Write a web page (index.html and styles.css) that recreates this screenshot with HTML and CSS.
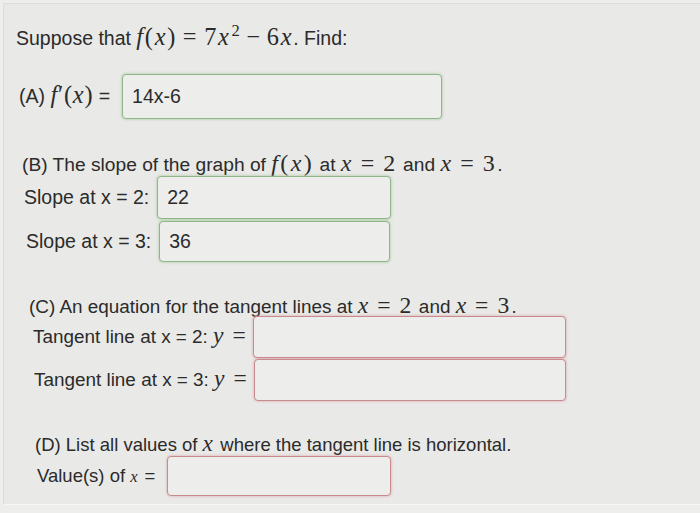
FILE: index.html
```html
<!DOCTYPE html>
<html>
<head>
<meta charset="utf-8">
<link rel="stylesheet" href="styles.css">
</head>
<body>
<div class="panel">
  <p class="head s1 h-title">Suppose that <span class="m mt"><i>f</i>(<i>x</i>)<span class="rel">=</span>7<i>x</i><sup>2</sup><span class="bin">−</span>6<i>x</i></span>. Find:</p>

  <div class="row s1 r-a">
    <span class="lbl">(A) <span class="m ma"><i>f</i>′(<i>x</i>)</span> =</span>
    <div class="box ok w-a">14x-6</div>
  </div>

  <p class="head s2 h-b">(B) The slope of the graph of <span class="m"><i>f</i>(<i>x</i>)</span> at <span class="m"><i>x</i><span class="rel">=</span>2</span> and <span class="m"><i>x</i><span class="rel">=</span>3</span>.</p>
  <div class="row s1 r-s2">
    <span class="lbl">Slope at x = 2:</span>
    <div class="box ok w-s2">22</div>
  </div>
  <div class="row s1 r-s3">
    <span class="lbl">Slope at x = 3:</span>
    <div class="box ok w-s3">36</div>
  </div>

  <p class="head s3 h-c">(C) An equation for the tangent lines at <span class="m"><i>x</i><span class="rel">=</span>2</span> and <span class="m"><i>x</i><span class="rel">=</span>3</span>.</p>
  <div class="row s3 r-t2">
    <span class="lbl">Tangent line at x = 2: <span class="m"><i>y</i><span class="rel end">=</span></span></span>
    <div class="box bad w-t2"></div>
  </div>
  <div class="row s3 r-t3">
    <span class="lbl">Tangent line at x = 3: <span class="m"><i>y</i><span class="rel end">=</span></span></span>
    <div class="box bad w-t3"></div>
  </div>

  <p class="head s4 h-d">(D) List all values of <span class="m"><i>x</i></span> where the tangent line is horizontal.</p>
  <div class="row s4 r-v">
    <span class="lbl">Value(s) of <span class="m ms"><i>x</i></span> =</span>
    <div class="box bad w-v"></div>
  </div>
</div>
</body>
</html>
```

FILE: styles.css
```css
html, body {
  margin: 0;
  padding: 0;
}
body {
  width: 700px;
  height: 513px;
  overflow: hidden;
  background: #eeeeec;
  font-family: "Liberation Sans", Arial, sans-serif;
  font-size: 19.5px;
  color: #2b2b2b;
}
.panel {
  margin: 3px 0 0 3px;
  height: 502px;
  box-sizing: border-box;
  background: #e9e9e7;
  border-top: 1px solid #dcdcda;
  border-left: 1px solid #dcdcda;
  border-bottom: 1px solid #f6f6f4;
  padding-left: 12px;
  overflow: hidden;
}
.s1 { font-size: 19.5px; }
.s2 { font-size: 19.2px; }
.s3 { font-size: 18.9px; }
.s4 { font-size: 18.5px; }
.head {
  margin: 0;
  line-height: 20px;
  white-space: nowrap;
}
.m {
  font-family: "Liberation Serif", "Times New Roman", serif;
  font-size: 1.25em;
  letter-spacing: 0.1em;
  line-height: 0;
}
.mt {
  letter-spacing: 0.07em;
}
.ma {
  letter-spacing: 0.03em;
}
.m i {
  font-style: italic;
}
.m sup {
  font-size: 0.68em;
  line-height: 0;
  margin-left: 1px;
}
.rel {
  margin: 0 0.28em;
}
.mt .rel {
  margin: 0 0.24em;
}
.rel.end {
  margin-right: 0;
}
.bin {
  margin: 0 0.2em;
}
.ms {
  font-size: 0.9em;
}
.row {
  display: flex;
  align-items: center;
  white-space: nowrap;
}
.lbl {
  margin-right: 8px;
}
.box {
  box-sizing: border-box;
  height: 43px;
  border-radius: 4px;
  background: #ededeb;
  padding-left: 9px;
  display: flex;
  align-items: center;
  font-size: 19.5px;
}
.ok {
  border: 1.5px solid #8fb68b;
  box-shadow: 0 0 2px 1px rgba(150, 195, 140, 0.45);
}
.bad {
  border: 1.5px solid #c98a8d;
  box-shadow: 0 0 2px 1px rgba(215, 150, 155, 0.4);
}

.h-title { margin-top: 24px; }
.r-a { margin-top: 26px; margin-left: 3px; }
.r-a .lbl { margin-right: 12px; }
.r-a .box { height: 45px; }
.w-a { width: 320px; }

.h-b { margin-top: 36px; margin-left: 6px; }
.r-s2 { margin-top: 1px; margin-left: 8px; }
.w-s2 { width: 234px; }
.r-s3 { margin-top: 2px; margin-left: 10px; }
.r-s3 .box { height: 41px; }
.w-s3 { width: 231px; }

.h-c { margin-top: 35px; margin-left: 13px; }
.r-t2 { margin-top: -1px; margin-left: 17px; }
.r-t2 .lbl, .r-t3 .lbl { margin-right: 5px; }
.r-t2 .box { height: 42px; }
.w-t2 { width: 313px; }
.r-t3 { margin-top: 1px; margin-left: 18px; }
.r-t3 .box { height: 42px; }
.w-t3 { width: 312px; }

.h-d { margin-top: 34px; margin-left: 19px; }
.r-v { margin-top: 1px; margin-left: 21px; }
.r-v .lbl { margin-right: 12px; }
.r-v .box { height: 40px; }
.w-v { width: 224px; }
```
